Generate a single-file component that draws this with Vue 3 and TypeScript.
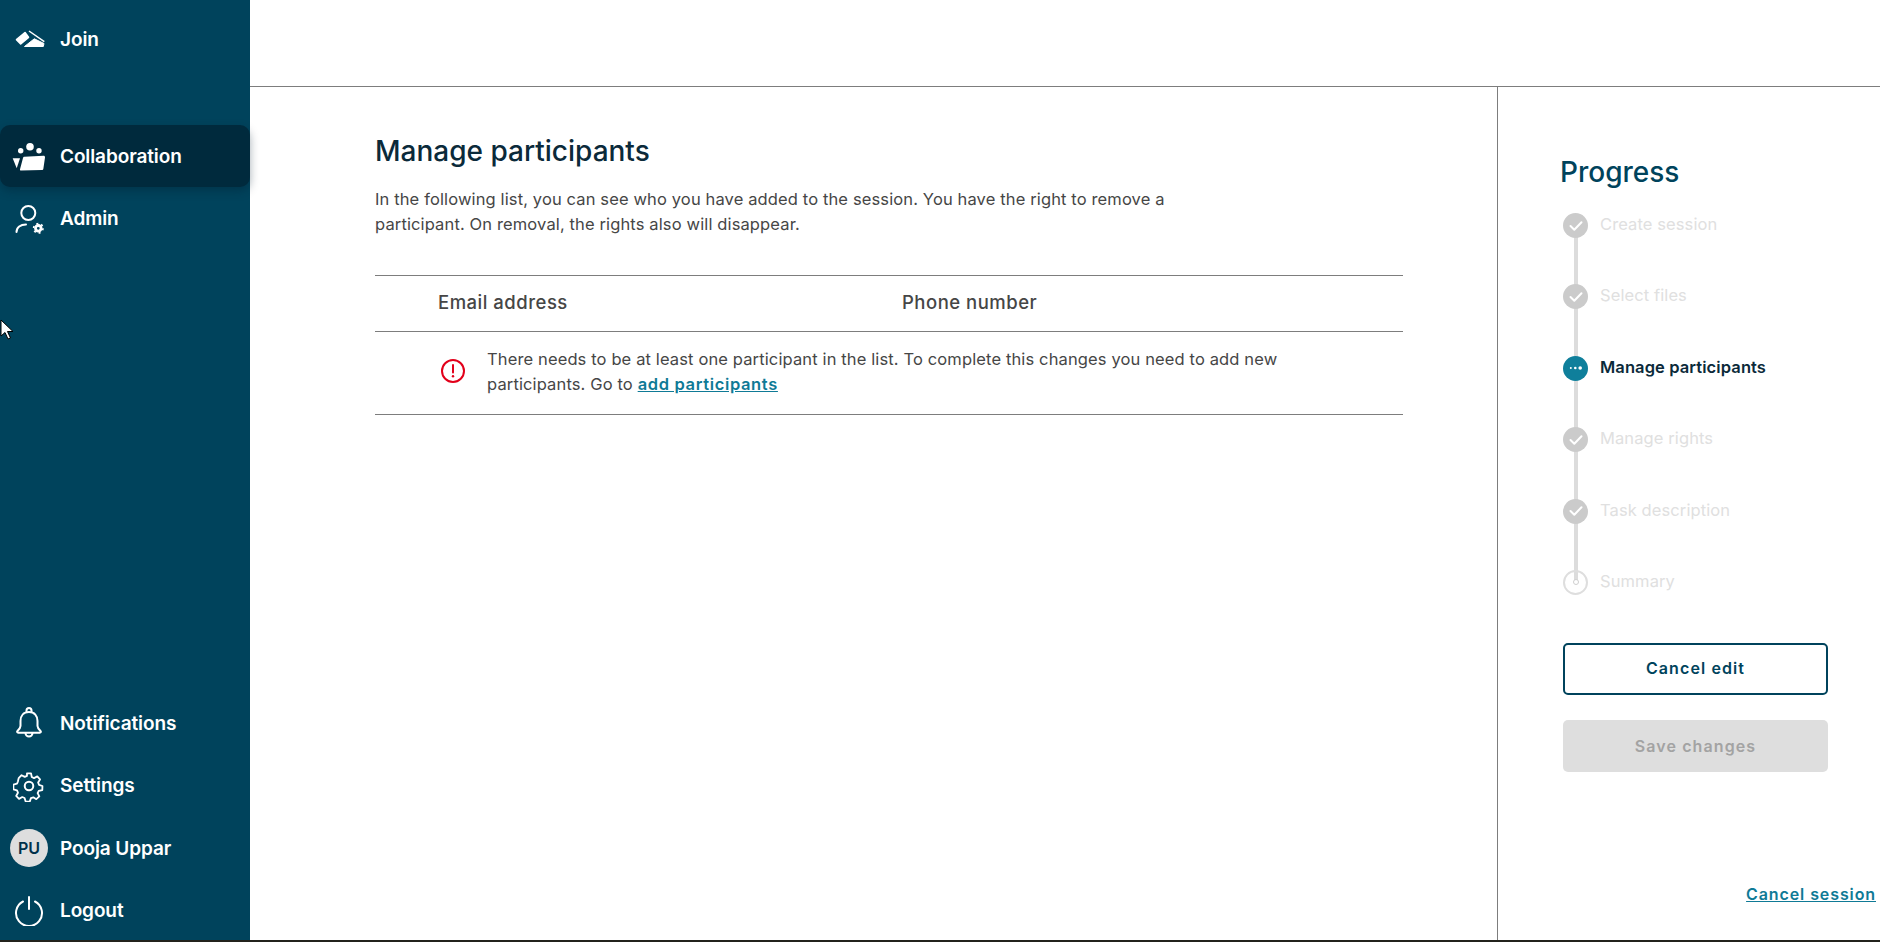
<script setup lang="ts">
interface Step { label: string; state: 'done' | 'active' | 'todo' }
const steps: Step[] = [
  { label: 'Create session', state: 'done' },
  { label: 'Select files', state: 'done' },
  { label: 'Manage participants', state: 'active' },
  { label: 'Manage rights', state: 'done' },
  { label: 'Task description', state: 'done' },
  { label: 'Summary', state: 'todo' },
]
</script>

<template>
  <div class="page">
    <aside class="sidebar">
      <div class="nav-item join">
        <span class="icon">
          <svg width="30" height="18" viewBox="0 0 30 18" fill="#fff" stroke="#fff" stroke-linejoin="round"><path d="M1.500 9.700 10 2.500 13.500 7.300 5.700 14Z" stroke-width="1.600"/><path d="M14 1 29.300 11.700" fill="none" stroke-width="1.500"/><path d="M9.500 16.500 19.300 8.800 29 13.500 28.300 16.500Z" stroke-width="1"/></svg>
        </span>
        <span>Join</span>
      </div>
      <div class="top-group">
        <div class="nav-item selected">
          <span class="icon">
            <svg width="36" height="32" viewBox="0 0 36 32" fill="#fff"><circle cx="18" cy="6.700" r="3.800"/><circle cx="8.700" cy="10.700" r="2.700"/><circle cx="27" cy="10.700" r="2.700"/><path d="M.7 18.300H8L4.700 28.300Z"/><path d="M11 18c.2-.8.700-1.300 1.500-1.300L31.500 15.800c1 0 1.600.6 1.500 1.600L31.400 28.500c-.1 1-.7 1.600-1.700 1.600L9 30.600c-.8 0-1.200-.5-1-1.300Z"/></svg>
          </span>
          <span>Collaboration</span>
        </div>
        <div class="nav-item">
          <span class="icon">
            <svg width="32" height="32" viewBox="0 0 32 32" fill="none"><circle cx="14.300" cy="11" r="7" stroke="#fff" stroke-width="2"/><path d="M2.500 30c0-4.500 4-7.500 9.500-7.500" stroke="#fff" stroke-width="2" stroke-linecap="round"/><circle cx="24.300" cy="26.300" r="2.800" stroke="#fff" stroke-width="2.800"/><circle cx="24.300" cy="26.300" r="4.700" stroke="#fff" stroke-width="1.600" stroke-dasharray="2 2.900"/></svg>
          </span>
          <span>Admin</span>
        </div>
      </div>
      <div class="bottom-group">
        <div class="nav-item">
          <span class="icon">
            <svg width="28" height="32" viewBox="0 0 28 32" fill="none" stroke="#fff" stroke-width="2" stroke-linejoin="round"><path d="M14 5c-5.500 0-8.500 3.800-8.500 9v5c0 2-1.500 3.500-3 5-.8.800-.3 1.700.7 1.700h21.600c1 0 1.500-.9.700-1.700-1.500-1.500-3-3-3-5v-5c0-5.200-3-9-8.500-9Z"/><path d="M11.500 5V3.500a2.500 2.500 0 0 1 5 0V5"/><path d="M10.500 26a3.500 3.500 0 0 0 7 0"/></svg>
          </span>
          <span>Notifications</span>
        </div>
        <div class="nav-item">
          <span class="icon">
            <svg width="32" height="32" viewBox="0 0 24 24" fill="none" stroke="#fff" stroke-width="1.500" stroke-linejoin="round"><circle cx="12" cy="12" r="3.200"/><path d="M10.300 1.500h3.400l.6 3 1.900.9 2.700-1.400 2.300 2.500-1.600 2.500.7 2 2.900 1-.1 3.400-3 .7-.9 1.900 1.400 2.700-2.500 2.300-2.500-1.600-2 .7-1 2.900h-3.400l-.9-3-1.900-.8-2.700 1.500-2.400-2.400 1.500-2.700-.8-1.900-3-.9V10.900l3-.8.800-2L3.400 5.400 5.800 3l2.700 1.400 1.800-.8Z" transform="translate(1.200 1.200) scale(.9)"/></svg>
          </span>
          <span>Settings</span>
        </div>
        <div class="nav-item">
          <span class="icon"><span class="avatar">PU</span></span>
          <span>Pooja Uppar</span>
        </div>
        <div class="nav-item">
          <span class="icon">
            <svg width="30" height="30" viewBox="0 0 30 30" fill="none" stroke="#fff" stroke-width="2" stroke-linecap="round"><path d="M9 5.500a13 13 0 1 0 12 0"/><path d="M15 1v12"/></svg>
          </span>
          <span>Logout</span>
        </div>
      </div>
    </aside>

    <div class="workspace">
      <header class="topbar"></header>
      <div class="columns">
        <main class="content">
          <h1>Manage participants</h1>
          <p class="intro">In the following list, you can see who you have added to the session. You have the right to remove a participant. On removal, the rights also will disappear.</p>
          <div class="table-head">
            <span class="col-email">Email address</span>
            <span>Phone number</span>
          </div>
          <div class="notice">
            <svg class="alert" width="26" height="26" viewBox="0 0 26 26" fill="none"><circle cx="13" cy="13" r="11" stroke="#e2001a" stroke-width="2"/><path d="M13 7v7.500" stroke="#e2001a" stroke-width="2" stroke-linecap="round"/><circle cx="13" cy="18.300" r="1.200" fill="#e2001a"/></svg>
            <p>There needs to be at least one participant in the list. To complete this changes you need to add new participants. Go to <a class="link">add participants</a></p>
          </div>
        </main>

        <aside class="progress">
          <h2>Progress</h2>
          <ol class="steps">
            <li v-for="(step, i) in steps" :key="step.label" class="step" :class="step.state">
              <span v-if="i < steps.length - 1" class="rail"></span>
              <span class="dot">
                <svg v-if="step.state === 'done'" width="14" height="12" viewBox="0 0 14 12" fill="none"><path d="M1.500 6 5.300 9.800 12.500 2.200" stroke="#fff" stroke-width="2" stroke-linecap="round" stroke-linejoin="round"/></svg>
                <svg v-else-if="step.state === 'active'" width="14" height="6" viewBox="0 0 14 6" fill="#fff"><circle cx="1.800" cy="3" r="1"/><circle cx="6.300" cy="3" r="1.300"/><circle cx="11.200" cy="3" r="1.800"/></svg>
                <span v-else class="inner"></span>
              </span>
              <span class="step-label">{{ step.label }}</span>
            </li>
          </ol>
          <button class="btn outline" type="button">Cancel edit</button>
          <button class="btn disabled" type="button">Save changes</button>
          <a class="link cancel-session">Cancel session</a>
        </aside>
      </div>
    </div>

    <svg class="cursor" width="14" height="22" viewBox="0 0 14 22"><path d="M1 1v16l4-3.500 3 6.500 2.500-1-3-6.500h5.500Z" fill="#fff" stroke="#000" stroke-width="1"/></svg>
    <div class="taskbar"></div>
  </div>
</template>

<style>
html, body { margin: 0; padding: 0; background: #fff; }
</style>

<style scoped>
* { box-sizing: border-box; }
.page {
  position: relative;
  display: flex;
  width: 1880px;
  height: 942px;
  overflow: hidden;
  font-family: "Inter", "Liberation Sans", sans-serif;
  color: #464646;
  background: #fff;
}
.sidebar {
  flex: 0 0 250px;
  display: flex;
  flex-direction: column;
  background: #00435c;
  color: #fff;
  height: 942px;
}
.nav-item {
  display: flex;
  align-items: center;
  height: 62.500px;
  font-size: 19px;
  font-weight: 600;
  letter-spacing: -0.1px;
}
.icon {
  flex: 0 0 60px;
  display: flex;
  justify-content: center;
  padding-right: 2px;
}
.join .icon, .top-group .icon { padding-right: 0; }
.join { margin-top: 8px; }
.top-group { margin-top: 54px; }
.bottom-group { margin-top: auto; }
.selected {
  background: #002a3d;
  border-radius: 10px;
  padding-top: 1px;
  box-shadow: 0 4px 10px rgba(0, 30, 45, 0.35);
}
.avatar {
  flex: none;
  width: 38px;
  height: 38px;
  border-radius: 50%;
  background: #dedede;
  color: #00304a;
  font-size: 16px;
  font-weight: 600;
  display: flex;
  align-items: center;
  justify-content: center;
}
.workspace {
  flex: 1;
  display: flex;
  flex-direction: column;
  min-width: 0;
}
.topbar {
  height: 87px;
  flex: none;
  border-bottom: 1px solid #7d7d7d;
}
.columns { flex: 1; display: flex; min-height: 0; }
.content {
  width: 1248px;
  flex: none;
  padding: 46px 0 0 125px;
  border-right: 1px solid #7d7d7d;
}
h1 {
  margin: 0;
  font-size: 28px;
  line-height: 36px;
  font-weight: 500;
  color: #0b2a3a;
}
.intro {
  width: 820px;
  margin: 18px 0 0;
  font-size: 16.500px;
  letter-spacing: 0.13px;
  line-height: 25px;
}
.table-head {
  display: flex;
  align-items: center;
  width: 1028px;
  height: 57px;
  margin-top: 38px;
  padding: 0 0 4px 63px;
  border-top: 1px solid #7d7d7d;
  border-bottom: 1px solid #7d7d7d;
  font-size: 18.500px;
  letter-spacing: 0.5px;
  font-weight: 500;
}
.col-email { width: 464px; }
.notice {
  display: flex;
  align-items: center;
  width: 1028px;
  height: 83px;
  padding-left: 63px;
  border-bottom: 1px solid #7d7d7d;
}
.alert { flex: none; margin: 0 0 5px 2px; }
.notice p {
  margin: -2px 0 0 21px;
  font-size: 16.500px;
  letter-spacing: 0.13px;
  line-height: 25px;
  width: 820px;
}
.link {
  color: #0f7a96;
  font-weight: 600;
  letter-spacing: 0.65px;
  text-decoration: underline;
}
.progress {
  position: relative;
  flex: 1;
  padding: 67px 0 0 62px;
}
h2 {
  margin: 0;
  font-size: 28px;
  line-height: 36px;
  font-weight: 500;
  color: #00435c;
}
.steps {
  list-style: none;
  margin: 23px 0 0;
  padding: 0;
}
.step {
  position: relative;
  display: flex;
  height: 71.400px;
  font-size: 16.500px;
  letter-spacing: 0.1px;
  color: #e0e0e0;
  padding-left: 3px;
  align-items: flex-start;
}
.rail {
  position: absolute;
  left: 13.500px;
  top: 12px;
  width: 4px;
  height: 71.400px;
  background: #dcdcdc;
}
.dot {
  position: relative;
  width: 25px;
  height: 25px;
  flex: none;
  border-radius: 50%;
  background: #cbcbcb;
  display: flex;
  align-items: center;
  justify-content: center;
}
.active .dot { background: #0f7f9b; }
.todo .dot { background: transparent; border: 2px solid #dedede; }
.inner { width: 6px; height: 6px; border-radius: 50%; border: 1.500px solid #cfcfcf; background: #fff; }
.step-label { margin-left: 12px; line-height: 22px; }
.active .step-label { color: #0b2a3a; font-weight: 600; }
.btn {
  display: block;
  width: 265px;
  height: 52px;
  margin-left: 3px;
  border-radius: 5px;
  font-family: inherit;
  font-size: 16px;
  font-weight: 600;
  letter-spacing: 1.100px;
}
.outline {
  margin-top: 2px;
  padding-bottom: 4px;
  background: #fff;
  border: 2px solid #00435c;
  color: #00435c;
}
.disabled {
  margin-top: 25px;
  background: #dedede;
  border: 0;
  color: #a3a3a3;
}
.cancel-session {
  position: absolute;
  right: 4px;
  bottom: 38px;
  font-size: 16px;
  font-weight: 600;
  letter-spacing: 0.9px;
}
.cursor { position: absolute; left: 0; top: 319px; }
.taskbar {
  position: absolute;
  left: 0;
  right: 0;
  bottom: 0;
  height: 2px;
  background: #23231c;
}
</style>
